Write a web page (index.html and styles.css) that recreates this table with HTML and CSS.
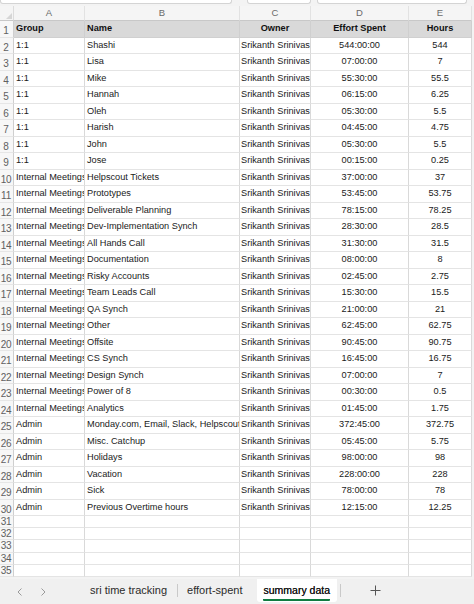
FILE: index.html
```html
<!DOCTYPE html>
<html>
<head>
<meta charset="utf-8">
<link rel="stylesheet" href="styles.css">
</head>
<body>
<div class="app">
  <div class="topbar">
    <div class="box b1"></div>
    <div class="box b2"></div>
    <div class="box b3"></div>
  </div>
  <div class="sheet">
    <div class="row colhead">
      <div class="corner"><span class="tri"></span></div>
      <div class="ch">A</div><div class="ch">B</div><div class="ch">C</div><div class="ch">D</div><div class="ch">E</div>
    </div>
    <div class="row hdr"><div class="rn">1</div><div class="c">Group</div><div class="c">Name</div><div class="c ctr">Owner</div><div class="c ctr">Effort Spent</div><div class="c ctr">Hours</div></div>
    <div class="row"><div class="rn">2</div><div class="c">1:1</div><div class="c">Shashi</div><div class="c o">Srikanth Srinivas</div><div class="c ctr">544:00:00</div><div class="c ctr">544</div></div>
    <div class="row"><div class="rn">3</div><div class="c">1:1</div><div class="c">Lisa</div><div class="c o">Srikanth Srinivas</div><div class="c ctr">07:00:00</div><div class="c ctr">7</div></div>
    <div class="row"><div class="rn">4</div><div class="c">1:1</div><div class="c">Mike</div><div class="c o">Srikanth Srinivas</div><div class="c ctr">55:30:00</div><div class="c ctr">55.5</div></div>
    <div class="row"><div class="rn">5</div><div class="c">1:1</div><div class="c">Hannah</div><div class="c o">Srikanth Srinivas</div><div class="c ctr">06:15:00</div><div class="c ctr">6.25</div></div>
    <div class="row"><div class="rn">6</div><div class="c">1:1</div><div class="c">Oleh</div><div class="c o">Srikanth Srinivas</div><div class="c ctr">05:30:00</div><div class="c ctr">5.5</div></div>
    <div class="row"><div class="rn">7</div><div class="c">1:1</div><div class="c">Harish</div><div class="c o">Srikanth Srinivas</div><div class="c ctr">04:45:00</div><div class="c ctr">4.75</div></div>
    <div class="row"><div class="rn">8</div><div class="c">1:1</div><div class="c">John</div><div class="c o">Srikanth Srinivas</div><div class="c ctr">05:30:00</div><div class="c ctr">5.5</div></div>
    <div class="row"><div class="rn">9</div><div class="c">1:1</div><div class="c">Jose</div><div class="c o">Srikanth Srinivas</div><div class="c ctr">00:15:00</div><div class="c ctr">0.25</div></div>
    <div class="row"><div class="rn">10</div><div class="c">Internal Meetings</div><div class="c">Helpscout Tickets</div><div class="c o">Srikanth Srinivas</div><div class="c ctr">37:00:00</div><div class="c ctr">37</div></div>
    <div class="row"><div class="rn">11</div><div class="c">Internal Meetings</div><div class="c">Prototypes</div><div class="c o">Srikanth Srinivas</div><div class="c ctr">53:45:00</div><div class="c ctr">53.75</div></div>
    <div class="row"><div class="rn">12</div><div class="c">Internal Meetings</div><div class="c">Deliverable Planning</div><div class="c o">Srikanth Srinivas</div><div class="c ctr">78:15:00</div><div class="c ctr">78.25</div></div>
    <div class="row"><div class="rn">13</div><div class="c">Internal Meetings</div><div class="c">Dev-Implementation Synch</div><div class="c o">Srikanth Srinivas</div><div class="c ctr">28:30:00</div><div class="c ctr">28.5</div></div>
    <div class="row"><div class="rn">14</div><div class="c">Internal Meetings</div><div class="c">All Hands Call</div><div class="c o">Srikanth Srinivas</div><div class="c ctr">31:30:00</div><div class="c ctr">31.5</div></div>
    <div class="row"><div class="rn">15</div><div class="c">Internal Meetings</div><div class="c">Documentation</div><div class="c o">Srikanth Srinivas</div><div class="c ctr">08:00:00</div><div class="c ctr">8</div></div>
    <div class="row"><div class="rn">16</div><div class="c">Internal Meetings</div><div class="c">Risky Accounts</div><div class="c o">Srikanth Srinivas</div><div class="c ctr">02:45:00</div><div class="c ctr">2.75</div></div>
    <div class="row"><div class="rn">17</div><div class="c">Internal Meetings</div><div class="c">Team Leads Call</div><div class="c o">Srikanth Srinivas</div><div class="c ctr">15:30:00</div><div class="c ctr">15.5</div></div>
    <div class="row"><div class="rn">18</div><div class="c">Internal Meetings</div><div class="c">QA Synch</div><div class="c o">Srikanth Srinivas</div><div class="c ctr">21:00:00</div><div class="c ctr">21</div></div>
    <div class="row"><div class="rn">19</div><div class="c">Internal Meetings</div><div class="c">Other</div><div class="c o">Srikanth Srinivas</div><div class="c ctr">62:45:00</div><div class="c ctr">62.75</div></div>
    <div class="row"><div class="rn">20</div><div class="c">Internal Meetings</div><div class="c">Offsite</div><div class="c o">Srikanth Srinivas</div><div class="c ctr">90:45:00</div><div class="c ctr">90.75</div></div>
    <div class="row"><div class="rn">21</div><div class="c">Internal Meetings</div><div class="c">CS Synch</div><div class="c o">Srikanth Srinivas</div><div class="c ctr">16:45:00</div><div class="c ctr">16.75</div></div>
    <div class="row"><div class="rn">22</div><div class="c">Internal Meetings</div><div class="c">Design Synch</div><div class="c o">Srikanth Srinivas</div><div class="c ctr">07:00:00</div><div class="c ctr">7</div></div>
    <div class="row"><div class="rn">23</div><div class="c">Internal Meetings</div><div class="c">Power of 8</div><div class="c o">Srikanth Srinivas</div><div class="c ctr">00:30:00</div><div class="c ctr">0.5</div></div>
    <div class="row"><div class="rn">24</div><div class="c">Internal Meetings</div><div class="c">Analytics</div><div class="c o">Srikanth Srinivas</div><div class="c ctr">01:45:00</div><div class="c ctr">1.75</div></div>
    <div class="row"><div class="rn">25</div><div class="c">Admin</div><div class="c">Monday.com, Email, Slack, Helpscout</div><div class="c o">Srikanth Srinivas</div><div class="c ctr">372:45:00</div><div class="c ctr">372.75</div></div>
    <div class="row"><div class="rn">26</div><div class="c">Admin</div><div class="c">Misc. Catchup</div><div class="c o">Srikanth Srinivas</div><div class="c ctr">05:45:00</div><div class="c ctr">5.75</div></div>
    <div class="row"><div class="rn">27</div><div class="c">Admin</div><div class="c">Holidays</div><div class="c o">Srikanth Srinivas</div><div class="c ctr">98:00:00</div><div class="c ctr">98</div></div>
    <div class="row"><div class="rn">28</div><div class="c">Admin</div><div class="c">Vacation</div><div class="c o">Srikanth Srinivas</div><div class="c ctr">228:00:00</div><div class="c ctr">228</div></div>
    <div class="row"><div class="rn">29</div><div class="c">Admin</div><div class="c">Sick</div><div class="c o">Srikanth Srinivas</div><div class="c ctr">78:00:00</div><div class="c ctr">78</div></div>
    <div class="row"><div class="rn">30</div><div class="c">Admin</div><div class="c">Previous Overtime hours</div><div class="c o">Srikanth Srinivas</div><div class="c ctr">12:15:00</div><div class="c ctr">12.25</div></div>
    <div class="row small"><div class="rn">31</div><div class="c"></div><div class="c"></div><div class="c"></div><div class="c"></div><div class="c"></div></div>
    <div class="row small"><div class="rn">32</div><div class="c"></div><div class="c"></div><div class="c"></div><div class="c"></div><div class="c"></div></div>
    <div class="row small"><div class="rn">33</div><div class="c"></div><div class="c"></div><div class="c"></div><div class="c"></div><div class="c"></div></div>
    <div class="row small"><div class="rn">34</div><div class="c"></div><div class="c"></div><div class="c"></div><div class="c"></div><div class="c"></div></div>
    <div class="row small"><div class="rn">35</div><div class="c"></div><div class="c"></div><div class="c"></div><div class="c"></div><div class="c"></div></div>
  </div>
  <div class="tabs">
    <div class="nav">
      <svg width="8" height="10" viewBox="0 0 8 10"><path d="M5.5 1.5 L2 5 L5.5 8.5" fill="none" stroke="#9a9a9a" stroke-width="1"/></svg>
    </div>
    <div class="nav nav2">
      <svg width="8" height="10" viewBox="0 0 8 10"><path d="M2.5 1.5 L6 5 L2.5 8.5" fill="none" stroke="#9a9a9a" stroke-width="1"/></svg>
    </div>
    <div class="tab t1">sri time tracking</div>
    <div class="sep"></div>
    <div class="tab t2">effort-spent</div>
    <div class="tab active"><span class="lbl">summary data</span></div>
    <div class="sep sep2"></div>
    <div class="plus">
      <svg width="11" height="11" viewBox="0 0 11 11"><path d="M5.5 0.5 V10.5 M0.5 5.5 H10.5" stroke="#555" stroke-width="1"/></svg>
    </div>
  </div>
</div>
</body>
</html>
```

FILE: styles.css
```css
* { box-sizing: border-box; }
html, body { margin: 0; padding: 0; }
body {
  width: 474px;
  height: 604px;
  overflow: hidden;
  background: #ffffff;
  font-family: "Liberation Sans", Arial, sans-serif;
}
.app {
  width: 474px;
  height: 604px;
  display: flex;
  flex-direction: column;
  background: #f3f3f3;
}
.topbar {
  height: 6px;
  display: flex;
  background: #f3f3f3;
}
.box {
  height: 4px;
  background: #ffffff;
  border: 1px solid #d4d4d4;
  border-top: none;
  border-radius: 0 0 3px 3px;
}
.b1 { width: 232px; }
.b2 { width: 64px; margin-left: 15px; }
.b3 { width: 150px; margin-left: 6px; }

.sheet {
  background: #ffffff;
  width: 474px;
}
.row {
  display: grid;
  grid-template-columns: 14px 71px 155px 71px 98px 63px 2px;
  height: 16.5px;
}
.row::after {
  content: "";
  background: #f3f3f3;
}
.row.small { height: 12.2px; }
.colhead {
  height: 15px;
  background: #f5f5f5;
}
.corner {
  position: relative;
  border-bottom: 1px solid #c8c8c8;
  border-right: 1px solid #dcdcdc;
}
.tri {
  position: absolute;
  right: 1px;
  bottom: 1px;
  width: 0;
  height: 0;
  border-left: 6px solid transparent;
  border-bottom: 6px solid #d6d6d6;
}
.ch {
  font-size: 9.5px;
  color: #6a6a6a;
  text-align: center;
  line-height: 14px;
  border-bottom: 1px solid #c8c8c8;
  border-right: 1px solid #e2e2e2;
}
.rn {
  font-size: 10px;
  color: #606060;
  background: #f7f7f7;
  border-right: 1px solid #cfcfcf;
  border-bottom: 1px solid #e6e6e6;
  text-align: center;
  padding-right: 1px;
  padding-top: 3px;
  line-height: 13px;
  overflow: hidden;
  white-space: nowrap;
  letter-spacing: -0.3px;
}
.row.small .rn {
  padding-top: 0;
  line-height: 12px;
}
.c {
  font-size: 9.2px;
  color: #1a1a1a;
  line-height: 15.5px;
  padding: 0 2px;
  white-space: nowrap;
  overflow: hidden;
  border-right: 1px solid #d9d9d9;
  border-bottom: 1px solid #e4e4e4;
}
.c.o { padding: 0 1px; }
.c.ctr { text-align: center; }
.hdr .c {
  background: #d9d9d9;
  font-weight: bold;
  color: #111;
  border-bottom: 1px solid #d0d0d0;
  border-right: 1px solid #cfcfcf;
}
.row.small .c { line-height: 11px; }

.tabs {
  flex: 1;
  margin-top: 2px;
  display: flex;
  align-items: flex-start;
  background: #f0f0f0;
  font-size: 11px;
  color: #2b2b2b;
}
.nav {
  width: 10px;
  margin-left: 16px;
  margin-top: 8px;
  display: flex;
}
.nav2 { margin-left: 13px; }
.tab {
  height: 23px;
  line-height: 22px;
  white-space: nowrap;
}
.t1 { margin-left: 41px; }
.sep {
  width: 1px;
  height: 13px;
  background: #c9c9c9;
  margin: 5px 9px 0 10px;
}
.sep2 { margin: 5px 0 0 3px; }
.active {
  margin-left: 15px;
  width: 80px;
  background: #ffffff;
  border-radius: 0 0 3px 3px;
  padding: 0 6px;
  font-size: 10.5px;
  color: #1a1a1a;
  text-shadow: 0 0 0.3px #1a1a1a;
}
.active .lbl {
  display: inline-block;
  line-height: 18px;
  border-bottom: 2px solid #107c41;
  border-radius: 1px;
}
.plus {
  margin-left: 29px;
  margin-top: 6px;
  display: flex;
}
```
